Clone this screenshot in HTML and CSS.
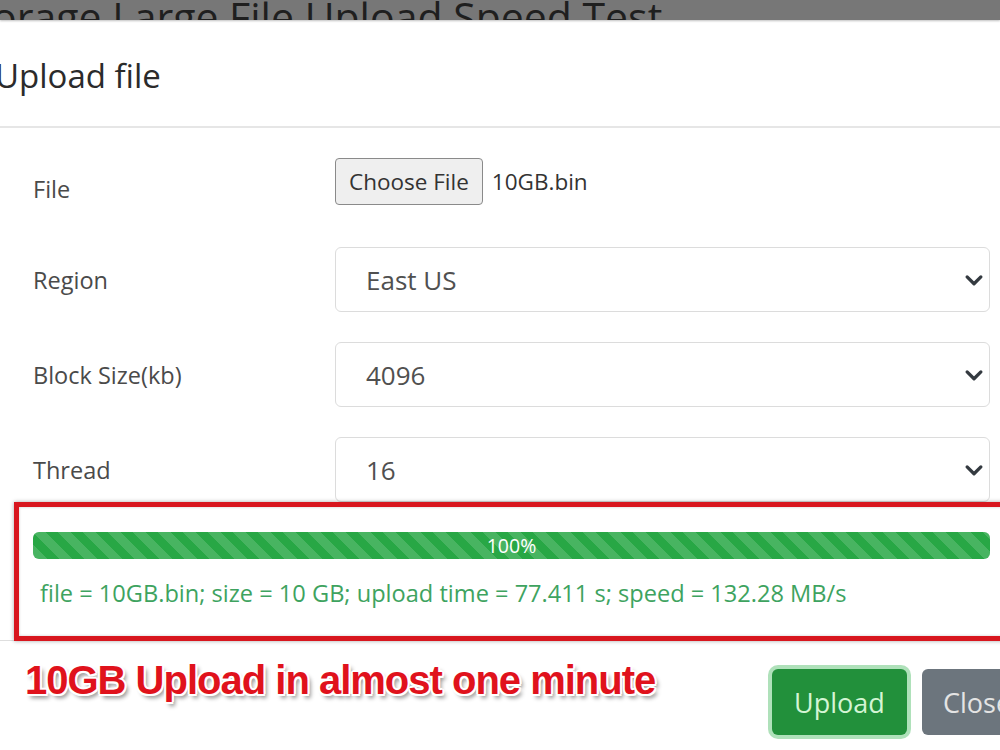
FILE: index.html
```html
<!DOCTYPE html>
<html lang="en">
<head>
<meta charset="utf-8">
<title>Upload file</title>
<link rel="stylesheet" href="styles.css">
</head>
<body>
<div class="page-title"><span class="page-title-text">Storage Large File Upload Speed Test</span></div>
<div class="modal">
  <div class="modal-header"><h5 class="modal-title">Upload file</h5></div>
  <div class="modal-body">
    <div class="form-row form-row-file">
      <label class="form-label">File</label>
      <div class="file-ctrl"><span class="file-btn">Choose File</span><span class="file-name">10GB.bin</span></div>
    </div>
    <div class="form-row">
      <label class="form-label">Region</label>
      <div class="select"><span class="select-value">East US</span><svg class="chevron" viewBox="0 0 16 16" width="20" height="20"><path d="M2.5 5.5l5.5 5.5 5.5-5.5" fill="none" stroke="#343a40" stroke-width="2.6" stroke-linecap="round" stroke-linejoin="round"/></svg></div>
    </div>
    <div class="form-row">
      <label class="form-label">Block Size(kb)</label>
      <div class="select"><span class="select-value">4096</span><svg class="chevron" viewBox="0 0 16 16" width="20" height="20"><path d="M2.5 5.5l5.5 5.5 5.5-5.5" fill="none" stroke="#343a40" stroke-width="2.6" stroke-linecap="round" stroke-linejoin="round"/></svg></div>
    </div>
    <div class="form-row">
      <label class="form-label">Thread</label>
      <div class="select"><span class="select-value">16</span><svg class="chevron" viewBox="0 0 16 16" width="20" height="20"><path d="M2.5 5.5l5.5 5.5 5.5-5.5" fill="none" stroke="#343a40" stroke-width="2.6" stroke-linecap="round" stroke-linejoin="round"/></svg></div>
    </div>
  </div>
  <div class="annot-box">
    <div class="progress"><div class="progress-bar" style="width:100%">100%</div></div>
    <div class="result">file = 10GB.bin; size = 10 GB; upload time = 77.411 s; speed = 132.28 MB/s</div>
  </div>
  <div class="modal-footer">
    <div class="annot-note">10GB Upload in almost one minute</div>
    <div class="btn-group">
      <button class="btn btn-upload">Upload</button>
      <button class="btn btn-close">Close</button>
    </div>
  </div>
</div>
</body>
</html>
```
FILE: styles.css
```css
html, body {
  margin: 0;
  padding: 0;
  background: #ffffff;
  overflow: hidden;
  width: 1000px;
  height: 750px;
}
body {
  font-family: "Open Sans", "Noto Sans", sans-serif;
  color: #444;
}
.page-title {
  height: 20px;
  background: #777777;
  overflow: hidden;
  box-shadow: 0 1px 2px rgba(0,0,0,0.25);
  position: relative;
  z-index: 1;
}
.page-title-text {
  display: block;
  font-size: 41px;
  line-height: 41px;
  margin-top: -4px;
  margin-left: -45px;
  color: #1f1f1f;
  white-space: nowrap;
}
.modal {
  background: #fff;
  width: 1000px;
}
.modal-header {
  height: 108px;
  border-bottom: 2px solid #e6e6e6;
  display: flex;
  align-items: center;
  padding-top: 4px;
  box-sizing: border-box;
}
.modal-title {
  margin: 0 0 0 -5px;
  font-size: 33px;
  font-weight: 400;
  color: #2b2b2b;
}
.modal-body {
  padding: 30px 10px 0 33px;
}
.form-row {
  display: flex;
  align-items: center;
  height: 65px;
  margin-bottom: 30px;
}
.form-row:last-child {
  margin-bottom: 0;
}
.form-row-file {
  height: 59px;
  align-items: flex-start;
}
.form-label {
  width: 302px;
  flex: none;
  font-size: 23.5px;
  color: #4a4a4a;
}
.form-row-file .form-label {
  padding-top: 15px;
}
.file-ctrl {
  display: flex;
  align-items: center;
}
.file-btn {
  display: inline-block;
  height: 47px;
  box-sizing: border-box;
  padding: 0 13px;
  line-height: 45px;
  font-size: 22.5px;
  color: #333;
  background: #efefef;
  border: 1px solid #8a8a8a;
  border-radius: 4px;
  white-space: nowrap;
}
.file-name {
  margin-left: 9px;
  font-size: 22.5px;
  color: #333;
}
.select {
  flex: 1;
  height: 65px;
  box-sizing: border-box;
  border: 1.5px solid #dcdcdc;
  border-radius: 6px;
  display: flex;
  align-items: center;
  justify-content: space-between;
  padding: 0 5px 0 30px;
}
.select-value {
  font-size: 26px;
  color: #505050;
}
.chevron {
  display: block;
}
.annot-box {
  width: 1010px;
  margin: 0 0 -1px 14px;
  border: 5px solid #d8161e;
  box-shadow: 0 0 4px rgba(0,0,0,0.35), inset 0 0 3px rgba(0,0,0,0.2);
  padding: 25px 0 0 14px;
  height: 139px;
  box-sizing: border-box;
  position: relative;
  z-index: 2;
  background: #fff;
}
.progress {
  width: 957px;
  height: 27px;
  border-radius: 6px;
  background: #e9ecef;
  overflow: hidden;
  display: flex;
}
.progress-bar {
  background-color: #28a745;
  background-image: linear-gradient(45deg, rgba(255,255,255,0.15) 25%, transparent 25%, transparent 50%, rgba(255,255,255,0.15) 50%, rgba(255,255,255,0.15) 75%, transparent 75%, transparent);
  background-size: 25px 25px;
  color: #fff;
  font-size: 19.5px;
  line-height: 27px;
  text-align: center;
}
.result {
  margin-top: 19px;
  padding-left: 7px;
  font-size: 23.6px;
  line-height: 30px;
  color: #3ea35f;
  white-space: nowrap;
}
.modal-footer {
  border-top: 1px solid #dedede;
  display: flex;
  align-items: flex-start;
  padding: 26px 0 0 25px;
  width: 1040px;
  box-sizing: border-box;
}
.annot-note {
  font-family: "Liberation Sans", Arial, sans-serif;
  font-weight: 700;
  font-size: 40px;
  letter-spacing: -1px;
  line-height: 46px;
  margin-top: -10px;
  color: #e0121c;
  white-space: nowrap;
  text-shadow:
    2px 0 0 #fff, -2px 0 0 #fff, 0 2px 0 #fff, 0 -2px 0 #fff,
    1.5px 1.5px 0 #fff, -1.5px -1.5px 0 #fff, 1.5px -1.5px 0 #fff, -1.5px 1.5px 0 #fff,
    3px 4px 4px rgba(0,0,0,0.45);
}
.btn-group {
  margin-left: auto;
  display: flex;
  gap: 15px;
  padding-top: 2px;
}
.btn {
  font-family: "Open Sans", "Noto Sans", sans-serif;
  height: 66px;
  border: none;
  border-radius: 6px;
  font-size: 27px;
  padding: 0;
  cursor: pointer;
}
.btn-upload {
  width: 135px;
  background: #22903b;
  color: #d4f5d4;
  box-shadow: 0 0 0 4px rgba(110, 200, 130, 0.55);
}
.btn-close {
  width: 118px;
  text-align: left;
  padding-left: 21px;
  background: #6c757d;
  color: #e4e4e4;
}
```
